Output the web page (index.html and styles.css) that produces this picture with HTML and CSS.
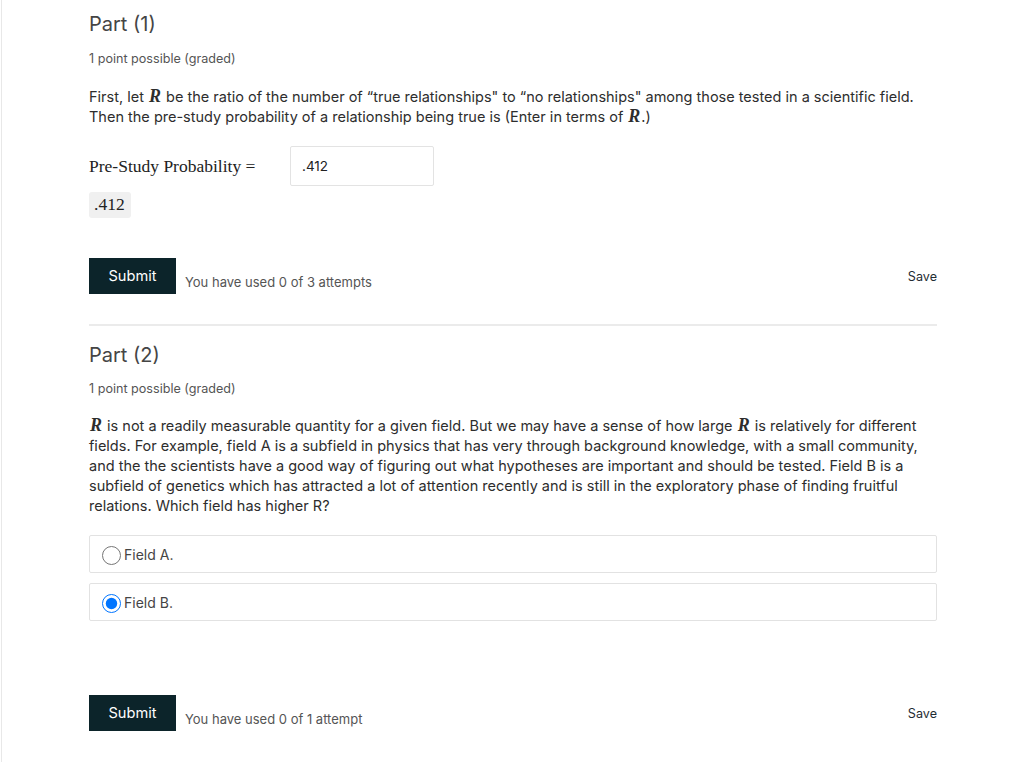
FILE: index.html
```html
<!DOCTYPE html>
<html lang="en">
<head>
    <meta charset="UTF-8">
    <title>Problem</title>
    <link rel="stylesheet" href="styles.css">
</head>
<body>
    <div class="page">
        <div class="problem">
            <h3 class="part-title">Part (1)</h3>
            <div class="points">1 point possible (graded)</div>
            <p class="prompt">First, let <span class="math">R</span> be the ratio of the number of “true relationships" to “no relationships" among those tested in a scientific field. Then the pre-study probability of a relationship being true is (Enter in terms of <span class="math">R</span>.)</p>

            <div class="formula-row">
                <span class="formula-label">Pre-Study Probability =</span>
                <input type="text" class="answer-input" value=".412">
            </div>
            <div class="preview">.412</div>

            <div class="action-row">
                <button class="submit-btn">Submit</button>
                <span class="attempts">You have used 0 of 3 attempts</span>
                <button class="save-btn">Save</button>
            </div>
        </div>

        <div class="problem second">
            <h3 class="part-title">Part (2)</h3>
            <div class="points">1 point possible (graded)</div>
            <p class="prompt"><span class="math">R</span> is not a readily measurable quantity for a given field. But we may have a sense of how large <span class="math">R</span> is relatively for different fields. For example, field A is a subfield in physics that has very through background knowledge, with a small community, and the the scientists have a good way of figuring out what hypotheses are important and should be tested. Field B is a subfield of genetics which has attracted a lot of attention recently and is still in the exploratory phase of finding fruitful relations. Which field has higher R?</p>

            <div class="choices">
                <label class="choice">
                    <input type="radio" name="field" class="radio">
                    <span>Field A.</span>
                </label>
                <label class="choice">
                    <input type="radio" name="field" class="radio" checked>
                    <span>Field B.</span>
                </label>
            </div>

            <div class="action-row bottom">
                <button class="submit-btn">Submit</button>
                <span class="attempts">You have used 0 of 1 attempt</span>
                <button class="save-btn">Save</button>
            </div>
        </div>
    </div>
</body>
</html>
```

FILE: styles.css
```css
* {
    box-sizing: border-box;
}

body {
    margin: 0;
    padding: 0;
    background-color: white;
    font-family: Inter, 'Noto Sans', sans-serif;
    color: #313131;
}

.page {
    border-left: 1px solid #e8e8e8;
    min-height: 762px;
    margin-left: 1px;
    padding: 0 87px 0 87px;
}

.problem {
    padding-top: 12px;
}

.problem.second {
    border-top: 2px solid #ebebeb;
    margin-top: 30px;
    padding-top: 17px;
}

.part-title {
    margin: 0;
    font-size: 20px;
    font-weight: 400;
    line-height: 24px;
    color: #454545;
}

.points {
    margin-top: 15px;
    font-size: 12.6px;
    line-height: 16px;
    color: #555;
}

.second .points {
    margin-top: 14px;
}

.prompt {
    margin: 20px 0 0;
    font-size: 14.5px;
    line-height: 20px;
    color: #2d2d2d;
}

.second .prompt {
    margin-top: 19px;
}

.math {
    font-family: 'Liberation Serif', 'DejaVu Serif', serif;
    font-style: italic;
    font-weight: bold;
    font-size: 18px;
    line-height: 14px;
    margin: 0 1px;
}

.formula-row {
    display: flex;
    align-items: center;
    margin-top: 19px;
}

.formula-label {
    font-family: 'Liberation Serif', 'DejaVu Serif', serif;
    font-size: 17.5px;
    color: #222;
    width: 201px;
}

.answer-input {
    width: 144px;
    height: 40px;
    border: 1px solid #e3e3e3;
    border-radius: 2px;
    padding: 0 11px;
    font-family: Inter, sans-serif;
    font-size: 13.5px;
    color: #222;
}

.preview {
    display: inline-block;
    margin-top: 6px;
    background-color: #f0f0f0;
    border-radius: 3px;
    padding: 2px 6px 3px 5px;
    font-family: 'Liberation Serif', 'DejaVu Serif', serif;
    font-size: 17.5px;
    line-height: 21px;
    color: #222;
}

.action-row {
    display: flex;
    align-items: flex-start;
    margin-top: 40px;
}

.action-row.bottom {
    margin-top: 74px;
}

.submit-btn {
    width: 87px;
    height: 36px;
    background-color: #0c242a;
    color: white;
    border: none;
    border-radius: 0;
    font-family: Inter, sans-serif;
    font-size: 14.6px;
    padding: 0;
    cursor: pointer;
}

.attempts {
    margin-left: 9px;
    margin-top: 16px;
    font-size: 13px;
    color: #555;
}

.save-btn {
    margin-left: auto;
    margin-top: 11px;
    background: none;
    border: none;
    padding: 0;
    font-family: Inter, sans-serif;
    font-size: 12.6px;
    color: #1f2d33;
    cursor: pointer;
}

.choices {
    margin-top: 19px;
    display: flex;
    flex-direction: column;
    gap: 10px;
}

.choice {
    display: flex;
    align-items: center;
    height: 38px;
    border: 1px solid #e2e2e2;
    border-radius: 2px;
    padding-left: 12px;
    font-size: 14px;
    color: #454545;
}

.radio {
    width: 19px;
    height: 19px;
    margin: 2px 3px 0 0;
}
```
